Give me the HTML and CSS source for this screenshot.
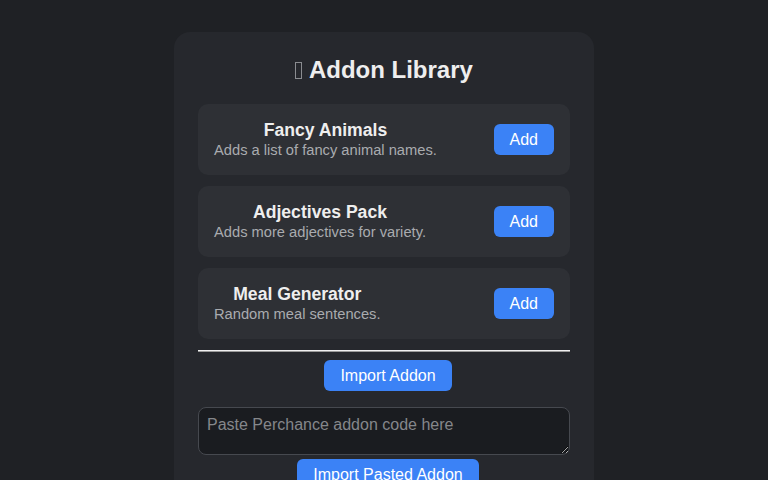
FILE: index.html
```html
<!DOCTYPE html>
<html lang="en">
<head>
    <meta charset="UTF-8">
    <meta name="viewport" content="width=device-width, initial-scale=1.0">
    <title>Addon Library</title>

    <link rel="stylesheet" href="styles.css">
</head>
<body>
    <div class="library">
        <h2 class="library-title"><span class="title-icon"></span> Addon Library</h2>

        <div class="addon-list">
            <div class="addon-item">
                <div class="addon-info">
                    <div class="addon-name">Fancy Animals</div>
                    <div class="addon-desc">Adds a list of fancy animal names.</div>
                </div>
                <button class="btn">Add</button>
            </div>

            <div class="addon-item">
                <div class="addon-info">
                    <div class="addon-name">Adjectives Pack</div>
                    <div class="addon-desc">Adds more adjectives for variety.</div>
                </div>
                <button class="btn">Add</button>
            </div>

            <div class="addon-item">
                <div class="addon-info">
                    <div class="addon-name">Meal Generator</div>
                    <div class="addon-desc">Random meal sentences.</div>
                </div>
                <button class="btn">Add</button>
            </div>
        </div>

        <hr class="divider">

        <div class="import-row">
            <button class="btn">Import Addon</button>
        </div>

        <textarea class="paste-box" placeholder="Paste Perchance addon code here"></textarea>

        <div class="paste-row">
            <button class="btn">Import Pasted Addon</button>
        </div>
    </div>
</body>
</html>
```

FILE: styles.css
```css
body {
    margin: 0;
    background-color: #1f2125;
    color: #eeeeee;
    font-family: "Liberation Sans", Arial, sans-serif;
}

.library {
    width: 372px;
    margin: 32px auto 0;
    padding: 24px;
    background-color: #26282d;
    border-radius: 16px;
}

.library-title {
    margin: 0 0 20px;
    font-size: 24px;
    line-height: 28px;
    text-align: center;
}

/* placeholder box for the library icon */
.title-icon {
    display: inline-block;
    box-sizing: border-box;
    width: 7px;
    height: 17px;
    margin-right: 1px;
    border: 1px solid #8a8c90;
    vertical-align: -1px;
}

.addon-item {
    display: flex;
    align-items: center;
    justify-content: space-between;
    padding: 16px;
    margin-bottom: 11px;
    background-color: #2e3035;
    border-radius: 10px;
}

.addon-info {
    text-align: center;
}

.addon-name {
    font-size: 17.6px;
    font-weight: bold;
    line-height: 21px;
}

.addon-desc {
    font-size: 14.7px;
    line-height: 18px;
    color: #a9abaf;
}

.btn {
    padding: 6px 16px;
    border: none;
    border-radius: 6px;
    background-color: #3b82f6;
    color: white;
    font-family: inherit;
    font-size: 16px;
    line-height: 19px;
}

.divider {
    margin: 0 0 8px;
    border: none;
    border-top: 1px solid #f0f0f0;
    border-bottom: 1px solid #9a9a9a;
}

.import-row,
.paste-row {
    padding-left: 8px;
    text-align: center;
}

.paste-box {
    display: block;
    box-sizing: border-box;
    width: 100%;
    height: 48px;
    margin: 16px 0 4px;
    padding: 8px;
    background-color: #1a1c20;
    border: 1px solid #46494f;
    border-radius: 8px;
    color: #eeeeee;
    font-family: inherit;
    font-size: 16px;
}

.paste-box::placeholder {
    color: #85878b;
}
```
